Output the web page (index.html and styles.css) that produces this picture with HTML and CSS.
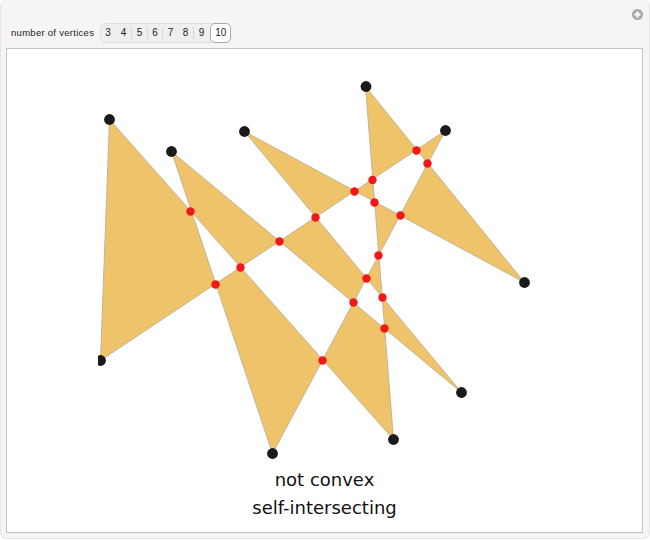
FILE: index.html
```html
<!DOCTYPE html>
<html lang="en">
<head>
<meta charset="utf-8">
<title>number of vertices</title>
<link rel="stylesheet" href="styles.css">
</head>
<body>
<div class="panel">
  <svg class="add" width="11" height="11" viewBox="0 0 11 11" aria-hidden="true">
    <circle cx="5.5" cy="5.5" r="5.5" fill="#a8a8a8"/>
    <path d="M5.5 2.6v5.8M2.6 5.5h5.8" stroke="#f5f5f5" stroke-width="2.4"/>
  </svg>
  <div class="controls">
    <span class="label">number of vertices</span>
    <div class="setter">
      <span class="opt">3</span>
      <span class="opt">4</span>
      <span class="opt sep">5</span>
      <span class="opt sep">6</span>
      <span class="opt sep">7</span>
      <span class="opt">8</span>
      <span class="opt sep">9</span>
      <span class="opt on">10</span>
    </div>
  </div>
  <div class="plot">
    <svg class="canvas" width="635" height="483" viewBox="6.5 48.5 635 483">
      <defs><clipPath id="frame"><rect x="97.5" y="70" width="440" height="395"/></clipPath></defs>
      <g clip-path="url(#frame)">
        <polygon class="shape" points="109,119 100,360 445,130 272,453 171,151 461,392 244,131 524,282 365,86 393,439"/>
        <g class="vertex">
          <circle cx="109" cy="119" r="5.4"/><circle cx="100" cy="360" r="5.4"/><circle cx="445" cy="130" r="5.4"/>
          <circle cx="272" cy="453" r="5.4"/><circle cx="171" cy="151" r="5.4"/><circle cx="461" cy="392" r="5.4"/>
          <circle cx="244" cy="131" r="5.4"/><circle cx="524" cy="282" r="5.4"/><circle cx="365.500" cy="86" r="5.4"/>
          <circle cx="393" cy="439" r="5.4"/>
        </g>
        <g class="cross">
          <circle cx="190" cy="211" r="4.2"/><circle cx="215" cy="284" r="4.2"/><circle cx="240" cy="267" r="4.2"/>
          <circle cx="279" cy="241" r="4.2"/><circle cx="315" cy="217" r="4.2"/><circle cx="354" cy="191" r="4.2"/>
          <circle cx="372" cy="179.500" r="4.2"/><circle cx="416" cy="150" r="4.2"/><circle cx="427" cy="163" r="4.2"/>
          <circle cx="374" cy="202" r="4.2"/><circle cx="400" cy="215" r="4.2"/><circle cx="378" cy="255" r="4.2"/>
          <circle cx="366" cy="278" r="4.2"/><circle cx="382" cy="297" r="4.2"/><circle cx="353" cy="302" r="4.2"/>
          <circle cx="384" cy="328" r="4.2"/><circle cx="322" cy="360" r="4.2"/>
        </g>
      </g>
      <text class="caption" x="324" y="485.500">not convex</text>
      <text class="caption" x="324" y="513.500">self-intersecting</text>
    </svg>
  </div>
</div>
</body>
</html>
```
FILE: styles.css
```css
html, body {
  margin: 0;
  padding: 0;
  background: #fff;
}
.panel {
  box-sizing: border-box;
  position: relative;
  width: 650px;
  height: 539px;
  padding: 23px 6px 5px 5px;
  display: flex;
  flex-direction: column;
  gap: 5px;
  background: #f5f5f5;
  border: 1px solid #e6e6e6;
  border-top: 0;
  border-radius: 6px;
}
.add {
  position: absolute;
  top: 9px;
  right: 6px;
}
.controls {
  display: flex;
  align-items: center;
  gap: 6px;
  height: 20px;
  padding-left: 5px;
}
.label {
  font: 9.5px/20px "Liberation Sans", sans-serif;
  letter-spacing: 0.28px;
  color: #222;
}
.setter {
  display: flex;
  align-items: center;
  height: 20px;
  width: 131px;
  box-sizing: border-box;
  border: 1px solid #e0e0e0;
  border-radius: 6px;
  background: #efefef;
}
.opt {
  width: 15.500px;
  text-align: center;
  font: 10px/12px "Liberation Sans", sans-serif;
  color: #222;
}
.opt:first-child {
  margin-left: -1px;
}
.sep {
  border-left: 1px solid #d6d6d6;
  box-sizing: border-box;
}
.on {
  width: 21px;
  height: 20px;
  line-height: 18px;
  box-sizing: border-box;
  margin-left: auto;
  margin-right: -1px;
  background: #fff;
  border: 1px solid #a9a9a9;
  border-radius: 5px;
}
.plot {
  flex: 1;
  background: #fff;
  border: 1px solid #c4c4c4;
}
.canvas {
  display: block;
}
.shape {
  fill: #efc36a;
  fill-rule: evenodd;
  stroke: #c2b496;
  stroke-width: 1;
}
.vertex {
  fill: #1a1a1a;
}
.cross {
  fill: #f01818;
}
.caption {
  font: 18px "DejaVu Sans", sans-serif;
  text-anchor: middle;
  fill: #111;
}
```
